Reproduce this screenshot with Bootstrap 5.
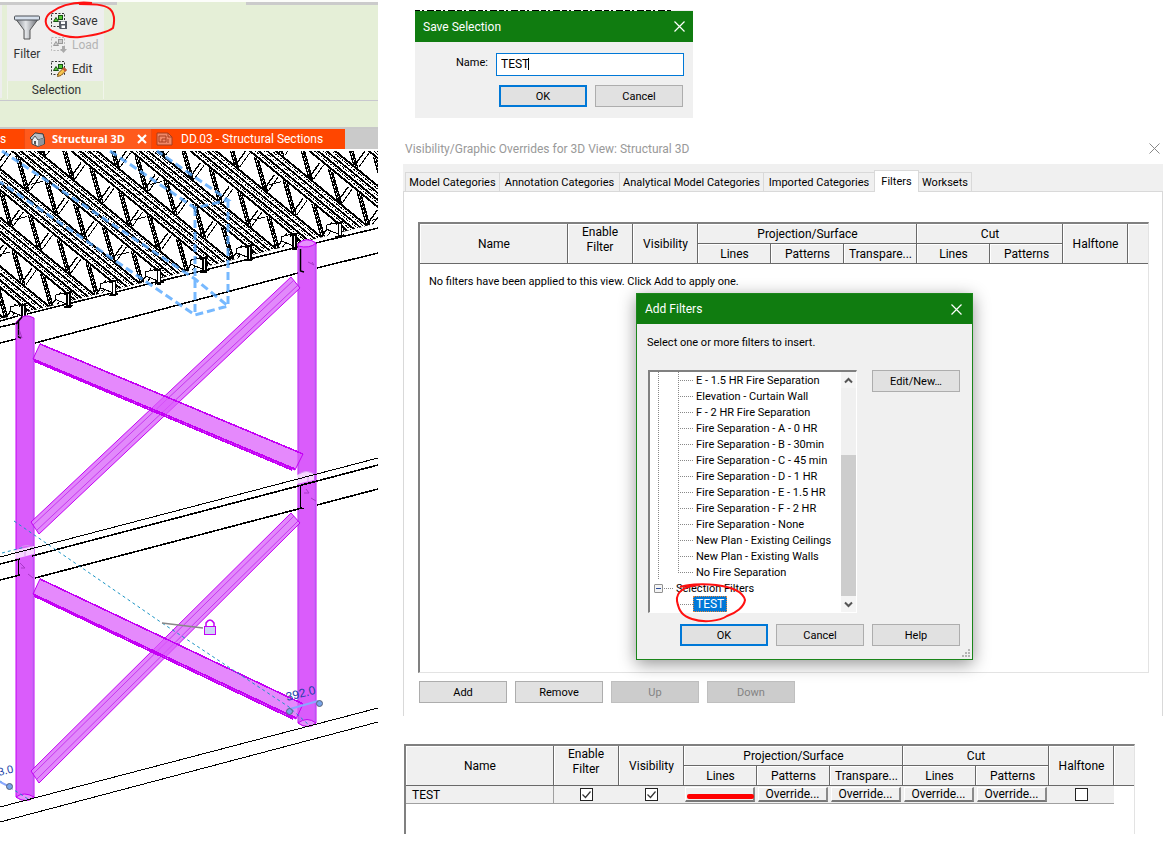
<!DOCTYPE html>
<html lang="en">
<head>
<meta charset="utf-8">
<meta name="viewport" content="width=device-width, initial-scale=1">
<title>Structural 3D - Selection filters</title>
<link rel="stylesheet" href="https://cdn.jsdelivr.net/npm/bootstrap@5.3.0/dist/css/bootstrap.min.css">
<style>
  :root { --face:#f0f0f0; --line:#696969; --soft:#d9d9d9; --accent:#0078d7; --title-green:#107c10; }
  body { font-family:Roboto,"Liberation Sans",sans-serif; font-size:12px; line-height:16px; color:#000; background:#fff; }
  .shell { display:grid; grid-template-columns:minmax(0,378fr) minmax(0,791fr); }
  .f11 { font-size:11px; }

  /* ribbon */
  .ribbon { background:#e5efd7; border-top:2px solid #fcfdfa; }
  .ribbon-edge { height:3px; }
  .ribbon-edge div { background:#cbcbcb; }
  .ribbon-main { height:96px; border-bottom:1px solid #c8c8ce; color:#333; }
  .prev-panel { width:2px; height:93px; background:#eee; margin-right:5px; }
  .panel-box { width:97px; }
  .panel-tools { background:#eee; height:76px; padding-left:6px; }
  .panel-name { height:18px; line-height:18px; padding-left:2px; border:solid #f1f5eb; border-width:0 1px; }
  .tool { border:0; background:none; padding:0; color:#333; display:flex; align-items:center; }
  .tool:disabled { color:#b4b4b4; }
  .tool-big { flex-direction:column; width:28px; padding-top:9px; }
  .tool-row { height:24px; gap:5px; }
  .ribbon-gap { height:28px; border-bottom:2px solid #c8c8c8; }
  .marker { position:absolute; overflow:visible; pointer-events:none; }
  .marker path { fill:none; stroke:#f11; stroke-width:2; }
  .marker-save { left:37px; top:-4px; }
  .doc-tabs { height:20px; background:#cacaca; color:#fff; }
  .doc-tabs a, .doc-tabs .here { color:#fff; text-decoration:none; display:flex; align-items:center; height:20px; background:#ff4600; white-space:nowrap; }
  .doc-tabs .here { background:#ff5a1c; border:solid #f04a10; border-width:0 1px; width:128px; font-family:"Open Sans",sans-serif; font-size:11px; font-weight:700; padding:0 4px; gap:7px; }
  .doc-tabs button { border:0; background:none; padding:0; line-height:0; margin-left:auto; }
  .canvas3d { display:block; width:100%; height:auto; }

  /* windows */
  .btn-win { height:22px; width:88px; padding:1px 0 0; border:1px solid #adadad; background:#e1e1e1; font-size:11px; line-height:19px; color:#000; text-align:center; }
  .btn-win.primary { border:2px solid var(--accent); line-height:17px; }
  .btn-win:disabled { background:#ccc; border-color:#bfbfbf; color:#838383; }
  .x-btn { border:0; background:none; padding:0; line-height:0; }
  .win-title { background:var(--title-green); color:#fff; height:31px; }
  .save-win { width:278px; margin-left:37px; margin-top:10px; background:var(--face); }
  .remnant { height:1px; width:256px; background:repeating-linear-gradient(90deg,#000 0 5px,#fff 5px 7px,#000 7px 9px,#fff 9px 12px,#000 12px 19px,#fff 19px 21px); }
  .name-input { display:block; width:188px; height:23px; border:1px solid var(--accent); padding:0 4px 2px; font-size:12px; outline:0; color:#000; background:#fff; }
  .caret { position:absolute; left:32px; top:5px; width:1px; height:12px; background:#000; }

  .vg { margin:17px 6px 0 25px; }
  .vg-title { height:29px; padding:6px 0 0 2px; color:#999; }
  .vg-tabs { background:var(--face); height:28px; padding:7px 0 0 2px; border-bottom:1px solid var(--soft); align-items:flex-end; }
  .vg-tabs a { height:19px; line-height:20px; border:1px solid var(--soft); border-bottom:0; border-left:0; color:#000; text-decoration:none; text-align:center; font-size:11px; white-space:nowrap; }
  .vg-tabs a:first-child { border-left:1px solid var(--soft); }
  .vg-tabs a.current { height:22px; background:#fff; margin-bottom:-1px; border-left:1px solid var(--soft); margin-left:-1px; line-height:21px; }
  .vg-body { border:solid var(--soft); border-width:0 1px; padding:30px 13px 13px 14px; }
  .grid-box { border:solid; border-width:2px 1px 1px 2px; border-color:#808080 #e3e3e3 #e3e3e3 #808080; background:#fff; }
  .grid-box table { width:100%; table-layout:fixed; border-collapse:separate; border-spacing:0; }
  .grid-box th { background:var(--face); border:solid var(--line); border-width:0 1px 1px 0; font-weight:400; text-align:center; padding:2px 0 0 1px; height:20px; line-height:15px; box-shadow:inset 1px 1px #fff; white-space:nowrap; }
  .grid-box th:last-child.tail { border-right:0; }
  .grid-box th.two { vertical-align:top; padding:1px 0 0; }
  .grid-box td { background:var(--face); border-bottom:1px solid #a0a0a0; height:18px; padding:0 2px 0 1px; line-height:14px; text-align:center; }
  .grid-box td.name { text-align:left; padding-left:6px; border-right:1px solid #a0a0a0; }
  .grid-box td.tail { background:#fff; border:0; }
  .btn-cell { display:block; width:100%; height:15px; padding:0; border:solid; border-width:1px 2px 2px 1px; border-color:#fff #8a8a8a #777 #fff; background:var(--face); line-height:12px; font-size:12px; color:#000; }
  .red-line { display:block; height:5px; background:red; margin:4px -1px 0 1px; border-radius:2px; }
  .chk { appearance:none; display:block; width:13px; height:13px; border:1px solid #222; margin:0 auto; background:#fff center/11px 11px no-repeat; border-radius:0; }
  .chk:checked { background-image:url("data:image/svg+xml,%3Csvg xmlns='http://www.w3.org/2000/svg' viewBox='0 0 11 11'%3E%3Cpath d='M1.5 5.5l3 3 5-6' fill='none' stroke='%23333' stroke-width='1.2'/%3E%3C/svg%3E"); }
  .empty-area { height:408px; padding:10px 9px; }
  .spare { height:30px; }
  .result { margin:28px 34px 0 26px; }
  .result .grid-box { border-bottom:0; }

  .add-win { position:absolute; left:233px; top:158px; width:337px; background:var(--face); border:1px solid #1a861a; box-shadow:0 4px 16px rgba(0,0,0,.42); }
  .add-win .win-title { height:30px; }
  .tree { width:209px; height:243px; border:solid; border-width:2px 1px 1px 2px; border-color:#808080 #fff #fff #808080; background:#fff; display:flex; }
  .tree-rows { flex:1; position:relative; font-size:11px; }
  .tree-rows ul { margin:0; padding:0; list-style:none; }
  .tree-rows li { height:16px; line-height:16px; white-space:nowrap; display:flex; align-items:center; }
  .leaf::before { content:""; width:15px; margin-left:28px; margin-right:1px; border-top:1px dotted #888; }
  .rails { background:repeating-linear-gradient(#888 0 1px,#fff 1px 2px) 8px 0/1px 100% no-repeat, repeating-linear-gradient(#888 0 1px,#fff 1px 2px) 28px 0/1px 200px no-repeat; }
  .minus { width:9px; height:9px; margin:0 1px 0 4px; border:1px solid #919191; background:linear-gradient(#2b4c9a,#2b4c9a) center/5px 1px no-repeat #f4f4f4; border-radius:1px; padding:0; }
  .group i { width:9px; margin-right:1px; border-top:1px dotted #888; }
  .leaf span, .group span { padding:1px 2px 0; }
  .leaf span.picked { background:var(--accent); color:#fff; outline:1px dotted #e8883a; outline-offset:-1px; padding:0 3px; margin-left:-1px; font-size:12px; }
  .scroll { width:15px; background:#f0f0f0; display:flex; flex-direction:column; }
  .scroll button { border:0; padding:0; height:16px; background:#f4f4f4; line-height:0; }
  .thumb { height:141px; background:#cdcdcd; margin-top:auto; }
  .marker-test { left:25px; top:210px; }
</style>
</head>
<body>
<div class="shell">
  <section>
    <div class="ribbon">
      <div class="ribbon-edge d-flex justify-content-between"><div style="width:31%"></div><div style="width:35%"></div></div>
      <div class="ribbon-main d-flex">
        <div class="prev-panel"></div>
        <div class="panel-box">
          <div class="panel-tools d-flex position-relative">
            <button class="tool tool-big" type="button">
              <svg width="28" height="28" viewBox="0 0 28 28"><defs><linearGradient id="fg"><stop offset="0" stop-color="#767b83"/><stop offset=".45" stop-color="#e4e6e9"/><stop offset="1" stop-color="#5c6067"/></linearGradient></defs><path d="M2 4L11 16V25H17V16L26 4Z" fill="url(#fg)" stroke="#555" stroke-width="1"/><rect x="1.500" y="2" width="25" height="4" rx="1" fill="#d6e0ec" stroke="#4c5157"/></svg>
              <span class="mt-1">Filter</span>
            </button>
            <div class="ms-2 ps-0 pt-1">
              <button class="tool tool-row" type="button">
                <svg width="18" height="17" viewBox="-2 0 18 17"><rect x=".5" y=".5" width="13" height="13" fill="none" stroke="#333" stroke-dasharray="2 1.500"/><path d="M2.500 8.500L5 4.500 7.500 8.500Z" fill="#5c3" stroke="#174f14"/><rect x="7.500" y="2.500" width="4" height="4" fill="#5c3" stroke="#174f14"/><path d="M8 8H16V16H9L8 15Z" fill="#555a63"/><path d="M10 8.500h4v2.500h-4zM10.500 12.500h3.500V15h-3.500z" fill="#fff"/></svg>Save</button>
              <button class="tool tool-row" type="button" disabled>
                <svg width="18" height="17" viewBox="-2 0 18 17"><rect x=".5" y=".5" width="13" height="13" fill="none" stroke="#bbb" stroke-dasharray="2 1.500"/><path d="M2.500 8.500L5 4.500 7.500 8.500Z" fill="#ccc" stroke="#999"/><rect x="7.500" y="2.500" width="4" height="4" fill="#ccc" stroke="#999"/><path d="M11 9h3v3h2l-3.500 4L9 12h2z" fill="#aaa"/></svg>Load</button>
              <button class="tool tool-row" type="button">
                <svg width="18" height="17" viewBox="-2 0 18 17"><rect x=".5" y=".5" width="13" height="13" fill="none" stroke="#333" stroke-dasharray="2 1.500"/><path d="M2.500 9.500L5 5.500 7.500 9.500Z" fill="#5c3" stroke="#174f14"/><rect x="7.500" y="3.500" width="4" height="4" fill="#5c3" stroke="#174f14"/><path d="M6.500 15.500L7.500 12 13 6.500 15.500 9 10 14.500Z" fill="#f8c44e" stroke="#8b5a14"/><path d="M13 6.500L15.500 9l-1.500 1.500L11.500 8z" fill="#c94b3b"/></svg>Edit</button>
            </div>
            <svg class="marker marker-save" width="72" height="40" viewBox="44 1 72 40"><path d="M92 3C72 1 58 7 50 13C44 18 44 26 52 31C62 36 72 38 80 37C96 35 108 32 113 28C115 20 114 13 110 9C104 4 92 4 79 4"/></svg>
          </div>
          <div class="panel-name text-center">Selection</div>
        </div>
      </div>
      <div class="ribbon-gap"></div>
    </div>
    <nav class="doc-tabs d-flex overflow-hidden" aria-label="Open views">
      <a href="#" style="width:24px">s</a>
      <div class="here">
        <svg width="16" height="16" viewBox="0 0 16 16"><path d="M1 7L6 2 14 3 15.500 8V13L9 15.500 3 13V8Z" fill="#eef1f4" stroke="#444" stroke-width="1"/><path d="M1 7L6 2 14 3 15 7 9 9 6 5 3 9Z" fill="#b8bec6" stroke="#333" stroke-width=".8"/><path d="M9 9V15.500L15 13V7Z" fill="#8e959d"/><path d="M5 10h2v4l-2-1z" fill="#555"/></svg>
        <span>Structural 3D</span>
        <button type="button" aria-label="Close view"><svg width="10" height="10" viewBox="0 0 10 10"><path d="M1 1L9 9M9 1L1 9" stroke="#fff" stroke-width="2.200"/></svg></button>
      </div>
      <a href="#" style="width:193px" class="ps-1 gap-2">
        <svg width="17" height="14" viewBox="0 0 17 14"><path d="M1 1H12L16 5V13H1Z" fill="#f08868" stroke="#a63c1c"/><path d="M3 4h7v6H3zM6 7h4M6 7v3M12 1v4h4M12 7v4" fill="none" stroke="#a63c1c"/></svg>DD.03 - Structural Sections</a>
    </nav>
    <svg class="canvas3d" id="model" viewBox="0 149 378 695" role="img" aria-label="3D view of a braced frame under steel joists">
      <defs><clipPath id="roof"><path d="M0 151H378V223L0 319Z"/></clipPath></defs>
      <g id="joists" clip-path="url(#roof)" fill="none" stroke="#000" shape-rendering="crispEdges"></g>
      <g fill="none" stroke="#000" shape-rendering="crispEdges">
        <path stroke-width="1.500" d="M0 321L18 316M27 314L302 246M316 243L378 228M0 327L18 323M35 343L302 272M0 343L20 338M317 268L378 253"/>
      </g>
      <g id="beamends" stroke="#000" fill="#fff" shape-rendering="crispEdges"></g>
      <g fill="#da5cfb" stroke="#c400f5">
        <path d="M16 322Q24 312 34 318V797Q26 804 16 797ZM298 244Q306 236 316 243V723Q308 730 298 723Z"/>
        <path d="M33 320V796M315 246V722M299 246V721" stroke="#b96bf0" fill="none"/>
      </g>
      <path d="M298 244Q306 236 316 243Q310 249 298 246ZM16 797Q24 791 34 797Q26 804 16 797ZM298 723Q307 716 316 723Q308 730 298 723Z" fill="#e690fc" stroke="#c400f5"/>
      <path d="M18.500 321V337L21 338M300.500 249V271L304 272M16 324L22 317" fill="none" stroke="#000" stroke-width="1.500"/>
      <g fill="#e080fb" fill-opacity=".93" stroke="#c400f5">
        <path d="M291 277L300 288 39 534 31 522Z"/>
        <path d="M291 513L300 523 39 783 31 771Z"/>
      </g>
      <path d="M294 280L33 525M298 285L36 531M294 516L33 774M298 521L36 780" stroke="#c637ef" fill="none" stroke-width="1"/>
      <g fill="#db5cfb" fill-opacity=".72" stroke="#c400f5">
        <path d="M40 344L303 454 295 470 33 359Z"/>
        <path d="M40 579L303 704 296 719 33 594Z"/>
      </g>
      <path d="M40 344L303 454M33 359L295 469M34 361L292 470M40 579L303 704M33 594L296 718M34 596L293 719" stroke="#c400f5" stroke-width="1.600" fill="none" shape-rendering="crispEdges"/>
      <path d="M15 550L34 546V554L15 559ZM297 475L306 471 314 474V480L297 484Z" fill="#fff" fill-opacity=".75"/>
      <path d="M20 548Q27 543 33 548M299 474Q307 469 314 474M25 551v5M308 476v6" fill="none" stroke="#d89af2"/>
      <g fill="none" stroke="#000" shape-rendering="crispEdges">
        <path d="M0 557L378 458M0 807L378 708M0 822L378 722"/>
        <path stroke-width="1.600" d="M0 564L20 559M32 556L378 465M0 580L20 575M35 578L302 508M317 505L378 489"/>
        <path stroke-width="1" d="M18.500 560V575M300.500 486V508L304 508"/>
      </g>
      <path d="M18 335l4 3-3-9M308 262l6 3-2-3M306 489l3 4-5 0M20 563l5 5-4 0M28 574l5 4M311 498l5 3" stroke="#a838c8" fill="none"/>
      <g fill="none" stroke="#55a8ff" stroke-opacity=".8" stroke-width="3" stroke-dasharray="8 4">
        <path d="M2 151L195 279 228 306 195 315 0 182M110 151L195 208 228 200 157 151M195 208V315M228 200V306"/>
      </g>
      <path d="M14 521L162 623 289 707 309 725M2 553L25 547M0 781L28 799" fill="none" stroke="#1a94c4" stroke-dasharray="3 3"/>
      <path d="M162 623L203 628" stroke="#888" stroke-width="1.500"/>
      <path d="M206 627V623Q210 617 214 623V627" fill="none" stroke="#c400f5" stroke-width="1.500"/><rect x="204.500" y="626.500" width="11" height="8" fill="#cdd6f4" stroke="#c400f5"/>
      <path d="M290 709L318 701M0 782L10 787" stroke="#8aa8ff" stroke-width="2"/>
      <g fill="#77a4e8" stroke="#56617a"><circle cx="289.500" cy="711.500" r="3"/><circle cx="319.500" cy="703.500" r="3"/><circle cx="9.500" cy="786.500" r="3"/></g>
      <g font-family="Liberation Sans, sans-serif" font-size="12" fill="#1c3fa8"><text transform="translate(287 701) rotate(-14)">392.0</text><text transform="translate(-1 776) rotate(-14)" font-size="11">3.0</text></g>
    </svg>
  </section>

  <section class="overflow-hidden">
    <form class="save-win" onsubmit="return false">
      <div class="remnant"></div>
      <div class="win-title d-flex align-items-center justify-content-between px-2"><span>Save Selection</span><button type="button" class="x-btn" aria-label="Close"><svg width="11" height="11" viewBox="0 0 11 11"><path d="M.5 .5L10.500 10.500M10.500 .5L.5 10.500" stroke="#fff" stroke-width="1.200"/></svg></button></div>
      <div class="d-flex justify-content-end align-items-start" style="padding:11px 9px 0 0">
        <label for="selName" class="f11 pe-2" style="padding-top:2px">Name:</label>
        <div class="position-relative"><input id="selName" class="name-input" type="text" value="TEST"><span class="caret"></span></div>
      </div>
      <div class="d-flex justify-content-end gap-2" style="padding:9px 10px 11px"><button class="btn-win primary" type="submit">OK</button><button class="btn-win" type="button">Cancel</button></div>
    </form>

    <div class="vg position-relative">
      <div class="vg-title d-flex justify-content-between"><span>Visibility/Graphic Overrides for 3D View: Structural 3D</span><button type="button" class="x-btn align-self-start" aria-label="Close" style="padding:2px 3px 0 0"><svg width="11" height="11" viewBox="0 0 11 11"><path d="M.5 .5L10.500 10.500M10.500 .5L.5 10.500" stroke="#888"/></svg></button></div>
      <nav class="vg-tabs d-flex">
        <a href="#" style="width:95px">Model Categories</a><a href="#" style="width:120px">Annotation Categories</a><a href="#" style="width:144px">Analytical Model Categories</a><a href="#" style="width:111px">Imported Categories</a><a href="#" class="current" style="width:45px">Filters</a><a href="#" style="width:53px">Worksets</a>
      </nav>
      <div class="vg-body">
        <div class="grid-box">
          <table>
            <colgroup><col style="width:148px"><col style="width:65px"><col style="width:65px"><col style="width:73px"><col style="width:73px"><col style="width:73px"><col style="width:73px"><col style="width:73px"><col style="width:65px"><col></colgroup>
            <thead>
              <tr><th rowspan="2">Name</th><th rowspan="2" class="two">Enable<br>Filter</th><th rowspan="2">Visibility</th><th colspan="3">Projection/Surface</th><th colspan="2">Cut</th><th rowspan="2">Halftone</th><th rowspan="2" class="tail"></th></tr>
              <tr><th>Lines</th><th>Patterns</th><th>Transpare...</th><th>Lines</th><th>Patterns</th></tr>
            </thead>
          </table>
          <div class="empty-area f11">No filters have been applied to this view. Click Add to apply one.</div>
        </div>
        <div class="d-flex gap-2 pt-2" style="padding-left:1px"><button class="btn-win" type="button">Add</button><button class="btn-win" type="button">Remove</button><button class="btn-win" type="button" disabled>Up</button><button class="btn-win" type="button" disabled>Down</button></div>
      </div>

      <div class="add-win" role="dialog" aria-label="Add Filters">
        <div class="win-title d-flex align-items-center justify-content-between ps-2" style="padding-right:10px"><span>Add Filters</span><button type="button" class="x-btn" aria-label="Close"><svg width="11" height="11" viewBox="0 0 11 11"><path d="M.5 .5L10.500 10.500M10.500 .5L.5 10.500" stroke="#fff" stroke-width="1.200"/></svg></button></div>
        <div class="f11" style="padding:11px 10px 0">Select one or more filters to insert.</div>
        <div class="d-flex justify-content-between align-items-start" style="padding:19px 12px 0 11px">
          <div class="tree">
            <div class="tree-rows">
              <ul class="rails">
                <li class="leaf"><span>E - 1.5 HR Fire Separation</span></li>
                <li class="leaf"><span>Elevation - Curtain Wall</span></li>
                <li class="leaf"><span>F - 2 HR Fire Separation</span></li>
                <li class="leaf"><span>Fire Separation - A - 0 HR</span></li>
                <li class="leaf"><span>Fire Separation - B - 30min</span></li>
                <li class="leaf"><span>Fire Separation - C - 45 min</span></li>
                <li class="leaf"><span>Fire Separation - D - 1 HR</span></li>
                <li class="leaf"><span>Fire Separation - E - 1.5 HR</span></li>
                <li class="leaf"><span>Fire Separation - F - 2 HR</span></li>
                <li class="leaf"><span>Fire Separation - None</span></li>
                <li class="leaf"><span>New Plan - Existing Ceilings</span></li>
                <li class="leaf"><span>New Plan - Existing Walls</span></li>
                <li class="leaf"><span>No Fire Separation</span></li>
              </ul>
              <ul>
                <li class="group"><button type="button" class="minus" aria-label="Collapse"></button><i></i><span>Selection Filters</span></li>
                <li class="leaf"><span class="picked">TEST</span></li>
              </ul>
              <svg class="marker marker-test" width="74" height="42" viewBox="675 582 74 42"><path d="M700 585C684 586 676 592 677 601C679 612 683 616 692 619C704 623 720 621 727 616C736 613 744 607 745 600C743 592 732 587 716 585C700 583 686 585 680 587"/></svg>
            </div>
            <div class="scroll">
              <button type="button" aria-label="Scroll up"><svg width="9" height="9" viewBox="0 0 9 9"><path d="M1 6.500L4.500 3 8 6.500" fill="none" stroke="#555" stroke-width="2"/></svg></button>
              <div class="thumb"></div>
              <button type="button" aria-label="Scroll down"><svg width="9" height="9" viewBox="0 0 9 9"><path d="M1 2.500L4.500 6 8 2.500" fill="none" stroke="#555" stroke-width="2"/></svg></button>
            </div>
          </div>
          <button class="btn-win" type="button">Edit/New…</button>
        </div>
        <div class="d-flex justify-content-end gap-2" style="padding:11px 12px 13px"><button class="btn-win primary" type="button">OK</button><button class="btn-win" type="button">Cancel</button><button class="btn-win" type="button">Help</button></div>
        <svg class="position-absolute bottom-0 end-0" width="10" height="10" viewBox="0 0 10 10" fill="#b5b5b5"><path d="M6 0h2v2H6zM3 3h2v2H3zM6 3h2v2H6zM0 6h2v2H0zM3 6h2v2H3zM6 6h2v2H6z"/></svg>
      </div>
    </div>

    <div class="result">
      <div class="grid-box">
        <table>
          <colgroup><col style="width:148px"><col style="width:65px"><col style="width:65px"><col style="width:73px"><col style="width:73px"><col style="width:73px"><col style="width:73px"><col style="width:73px"><col style="width:65px"><col></colgroup>
          <thead>
            <tr><th rowspan="2">Name</th><th rowspan="2" class="two">Enable<br>Filter</th><th rowspan="2">Visibility</th><th colspan="3">Projection/Surface</th><th colspan="2">Cut</th><th rowspan="2">Halftone</th><th rowspan="2" class="tail"></th></tr>
            <tr><th>Lines</th><th>Patterns</th><th>Transpare...</th><th>Lines</th><th>Patterns</th></tr>
          </thead>
          <tbody>
            <tr><td class="name">TEST</td><td><input class="chk" type="checkbox" checked aria-label="Enable filter"></td><td><input class="chk" type="checkbox" checked aria-label="Visibility"></td><td><button type="button" class="btn-cell" aria-label="Line override"><span class="red-line"></span></button></td><td><button type="button" class="btn-cell">Override...</button></td><td><button type="button" class="btn-cell">Override...</button></td><td><button type="button" class="btn-cell">Override...</button></td><td><button type="button" class="btn-cell">Override...</button></td><td><input class="chk" type="checkbox" aria-label="Halftone"></td><td class="tail"></td></tr>
          </tbody>
        </table>
        <div class="spare"></div>
      </div>
    </div>
  </section>
</div>
<script src="https://cdn.jsdelivr.net/npm/bootstrap@5.3.0/dist/js/bootstrap.bundle.min.js"></script>
<script>
  // Open-web roof joists: one lattice of nodes, repeated joist by joist.
  const bayX = 28.8, bayY = 23.6, stepX = 45.2, stepY = -11.7, slope = bayY / bayX;
  const make = (parent, d, width, dash, color) => {
    const p = document.createElementNS('http://www.w3.org/2000/svg', 'path');
    p.setAttribute('d', d);
    p.setAttribute('stroke-width', width);
    if (dash) p.setAttribute('stroke-dasharray', dash);
    if (color) p.setAttribute('stroke', color);
    document.getElementById(parent).append(p);
  };
  for (let j = -6; j < 13; j++) {
    const x0 = 25 + j * stepX, y0 = 188.3 + j * stepY;
    let legs = '', thin = '';
    for (let n = -12; n < 13; n++) {
      const x = x0 + n * bayX, y = y0 + n * bayY;
      legs += `M${x} ${y}l-9 -32M${x + 4} ${y + 3}l-9 -32M${x + 1} ${y}l10 -14`;
      thin += `M${x + 5} ${y + 2}l10 -14M${x + 2} ${y + 1}l-9 -32`;
      if ((n + j) % 3 === 0) thin += `M${x + 6} ${y - 4}l12 -3`;
    }
    make('joists', legs, 1.4);
    make('joists', thin, 1);
  }
  for (let j = -6; j < 13; j++) {
    const x0 = 25 + j * stepX, y0 = 188.3 + j * stepY;
    const rail = (o, w, dash, color) => make('joists', `M${x0 - 400} ${y0 - 400 * slope + o}L${x0 + 400} ${y0 + 400 * slope + o}`, w, dash, color);
    rail(11, 17, '', '#fff');
    rail(1, 2); rail(4, 1, '2 1'); rail(8, 1.8); rail(11, 1, '1 1'); rail(15, 2); rail(18, 1, '2 1'); rail(22, 2);
  }
  for (let k = 0; k < 8; k++) {
    const x = 22 + k * 45.2, y = 305 - k * 11.7;
    make('beamends', `M${x - 12} ${y + 2}L${x} ${y - 1}V${y + 11}L${x - 12} ${y + 6}Z`, 1);
    make('beamends', `M${x} ${y}V${y + 14}H${x + 3}V${y}Z`, 1.5);
    make('beamends', `M${x - 3} ${y + 1}L${x + 6} ${y - 2}M${x - 3} ${y + 14}L${x + 6} ${y + 12}`, 1.7);
  }
</script>
</body>
</html>
